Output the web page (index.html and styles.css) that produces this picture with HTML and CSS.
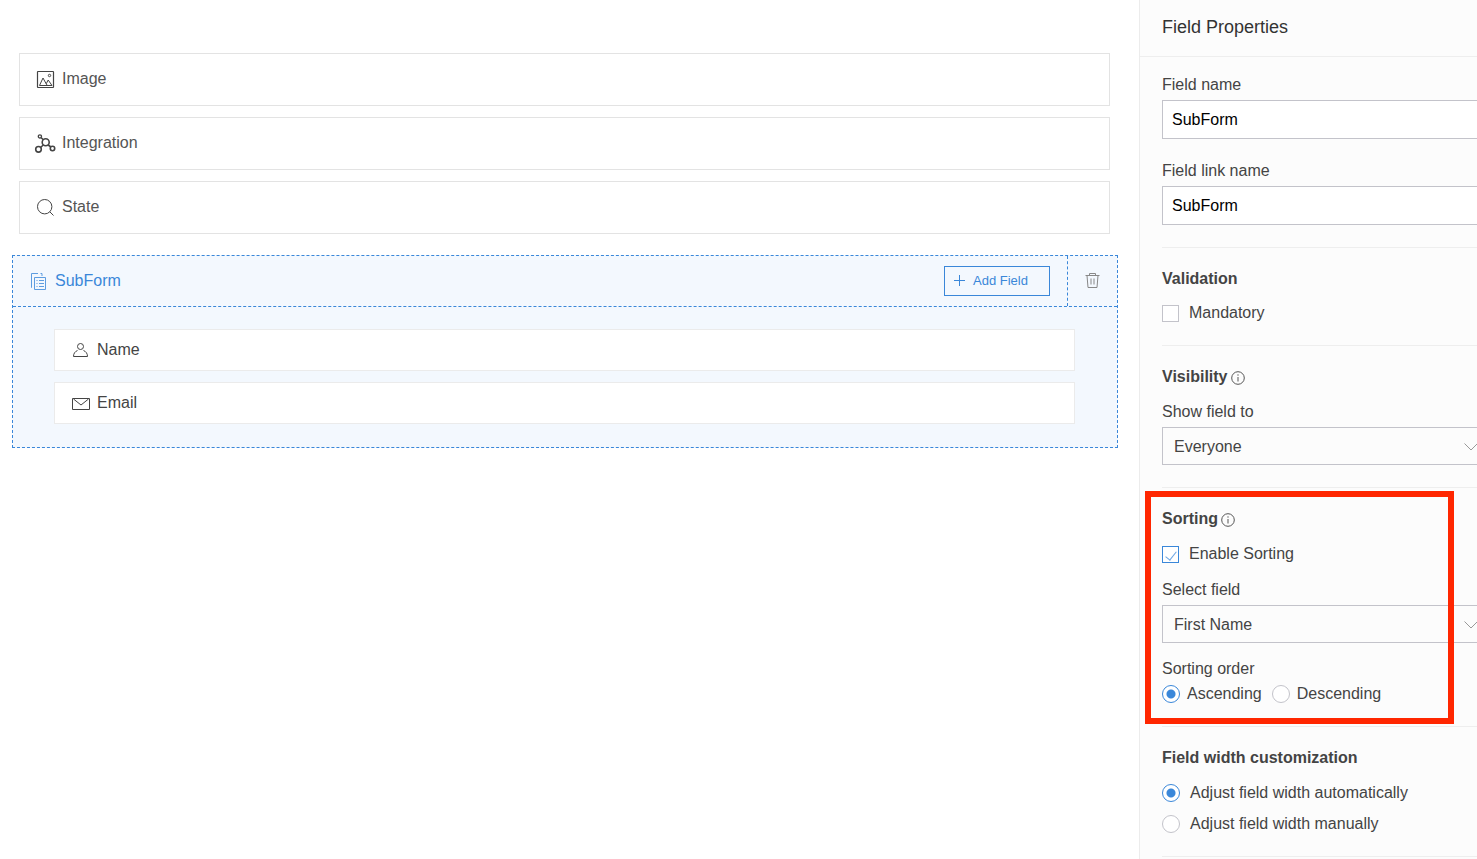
FILE: index.html
```html
<!DOCTYPE html>
<html lang="en">

<head>
    <meta charset="UTF-8">
    <meta name="viewport" content="width=device-width, initial-scale=1.0">
    <link rel="stylesheet" href="styles.css">
    <title>Form Builder</title>
</head>

<body>
    <main class="builder">
        <div class="field-list">
            <div class="field-card">
                <svg class="icon" width="20" height="20" viewBox="0 -1 20 20">
                    <rect x="2.500" y="1.500" width="16" height="16" rx="0.500" stroke-width="1.200" />
                    <path d="M4.500 15.500h12.500L13.200 10l-2 3.800L8 8z M11.200 13.800l1.200 1.700" />
                    <circle cx="14.500" cy="5.500" r="1.200" />
                </svg>
                <span>Image</span>
            </div>
            <div class="field-card">
                <svg class="icon icon-bold" width="20" height="20" viewBox="0 -1 20 20">
                    <circle cx="10.700" cy="8.300" r="3.500" />
                    <circle cx="3.500" cy="15.300" r="2.800" />
                    <circle cx="17.500" cy="14.500" r="2.200" />
                    <circle cx="4.900" cy="2.400" r="1.600" stroke-width="1.300" />
                    <path d="M6 3.500l2.300 2.300M8.300 11l-2.800 2.500M13.200 11l2.700 2" />
                </svg>
                <span>Integration</span>
            </div>
            <div class="field-card">
                <svg class="icon" width="20" height="20" viewBox="0 -1 20 20">
                    <circle cx="9.700" cy="8.700" r="7.200" />
                    <path d="M14.800 13.800l3.700 3.700" />
                </svg>
                <span>State</span>
            </div>
        </div>

        <section class="subform">
            <div class="subform-header">
                <svg class="icon icon-blue icon-soft" width="17" height="20" viewBox="0 0 17 20">
                    <path d="M2 16.500H1.500v-14H8M10.500 2.500h1.500v2.500" />
                    <path d="M4.500 6.500h11v12h-11z" />
                    <path d="M6.500 9.500h1M9 9.500h5M6.500 12.500h1M9 12.500h5M6.500 15.500h1M9 15.500h5" />
                </svg>
                <span class="subform-name">SubForm</span>
                <button type="button" class="add-field">
                    <svg class="icon icon-blue" width="11" height="11" viewBox="0 0 11 11">
                        <path d="M5.500 0v11M0 5.500h11" />
                    </svg>
                    Add Field
                </button>
                <button type="button" class="delete" aria-label="Delete">
                    <svg class="icon" width="15" height="19" viewBox="0 0 15 19">
                        <path d="M0.500 3.500h14M4.500 3.500v-2h6v2M2 3.500l1 12h9l1-12M6 6.500v6M9 6.500v6" />
                    </svg>
                </button>
            </div>
            <div class="subform-body">
                <div class="sub-card">
                    <svg class="icon" width="18" height="16" viewBox="0 0 18 16">
                        <circle cx="8.500" cy="4.500" r="3" />
                        <path d="M5.500 8.500C3 9.500 1.500 11.500 1.500 14.500h14c0-3-1.500-5-4-6" />
                    </svg>
                    <span>Name</span>
                </div>
                <div class="sub-card">
                    <svg class="icon" width="18" height="16" viewBox="0 0 18 16">
                        <path d="M0.500 3.500h17v11h-17z M1.500 4l7.500 6 7.500-6" />
                    </svg>
                    <span>Email</span>
                </div>
            </div>
        </section>
    </main>

    <aside class="properties">
        <h1>Field Properties</h1>

        <div class="properties-body">
            <section class="basic">
                <div class="field">
                    <label for="fieldName">Field name</label>
                    <input type="text" id="fieldName" value="SubForm">
                </div>
                <div class="field">
                    <label for="linkName">Field link name</label>
                    <input type="text" id="linkName" value="SubForm">
                </div>
            </section>

            <section>
                <h2>Validation</h2>
                <label class="check"><input type="checkbox"> Mandatory</label>
            </section>

            <section>
                <h2>Visibility
                    <svg class="icon info" width="14" height="14" viewBox="0 0 14 14">
                        <circle cx="7" cy="7" r="6.300" />
                        <path d="M7 6v4.500M7 3.300v1.400" />
                    </svg>
                </h2>
                <div class="field">
                    <label for="showTo">Show field to</label>
                    <div class="select">
                        <select id="showTo">
                            <option>Everyone</option>
                        </select>
                        <svg class="icon chevron" width="14" height="8" viewBox="0 0 14 8">
                            <path d="M0.500 0.500L7 7l6.500-6.500" />
                        </svg>
                    </div>
                </div>
            </section>

            <section class="sorting">
                <h2>Sorting
                    <svg class="icon info" width="14" height="14" viewBox="0 0 14 14">
                        <circle cx="7" cy="7" r="6.300" />
                        <path d="M7 6v4.500M7 3.300v1.400" />
                    </svg>
                </h2>
                <label class="check"><input type="checkbox" checked> Enable Sorting</label>
                <div class="field">
                    <label for="sortField">Select field</label>
                    <div class="select">
                        <select id="sortField">
                            <option>First Name</option>
                        </select>
                        <svg class="icon chevron" width="14" height="8" viewBox="0 0 14 8">
                            <path d="M0.500 0.500L7 7l6.500-6.500" />
                        </svg>
                    </div>
                </div>
                <div class="field" role="radiogroup" aria-labelledby="orderLabel">
                    <span class="group-label" id="orderLabel">Sorting order</span>
                    <div class="order">
                        <label class="radio"><input type="radio" name="order" checked> Ascending</label>
                        <label class="radio"><input type="radio" name="order"> Descending</label>
                    </div>
                </div>
                <div class="highlight"></div>
            </section>

            <section>
                <h2>Field width customization</h2>
                <div class="width-options">
                    <label class="check"><input type="radio" name="width" checked> Adjust field width automatically</label>
                    <label class="check"><input type="radio" name="width"> Adjust field width manually</label>
                </div>
            </section>
        </div>
    </aside>
</body>

</html>
```
FILE: styles.css
```css
* {
    box-sizing: border-box;
}

body {
    font-family: "Liberation Sans", Arial, sans-serif;
    font-size: 16px;
    line-height: 20px;
    color: #444;
    background-color: #fff;
    margin: 0;
    display: flex;
    min-height: 100vh;
}

input,
select,
button {
    font-family: inherit;
    font-size: inherit;
    margin: 0;
}

.icon {
    fill: none;
    stroke: #444;
    stroke-width: 1;
    flex-shrink: 0;
}

.icon-bold {
    stroke-width: 1.6;
    overflow: visible;
}

.icon-blue {
    stroke: #3a87d9;
}

.icon-soft {
    opacity: 0.8;
}

/* form builder */
.builder {
    flex: 1;
    min-width: 0;
    padding: 53px 21px 0 12px;
}

.field-list {
    display: flex;
    flex-direction: column;
    gap: 11px;
    padding: 0 8px 0 7px;
}

.field-card {
    display: flex;
    align-items: center;
    gap: 7px;
    padding: 15px 15px 16px;
    color: #555;
    border: 1px solid #e3e3e3;
}

.subform {
    margin-top: 21px;
    background-color: #f3f8fe;
    border: 1px dashed #3a87d9;
}

.subform-header {
    display: flex;
    align-items: center;
    height: 51px;
    padding-left: 17px;
    border-bottom: 1px dashed #3a87d9;
}

.subform-name {
    flex: 1;
    margin-left: 8px;
    color: #3a87d9;
}

.add-field {
    display: flex;
    align-items: center;
    gap: 8px;
    width: 106px;
    height: 30px;
    margin-right: 17px;
    padding: 0 9px 2px;
    font-size: 13px;
    color: #3a87d9;
    background: none;
    border: 1px solid #3a87d9;
    cursor: pointer;
}

.delete {
    display: flex;
    align-items: center;
    justify-content: center;
    align-self: stretch;
    width: 50px;
    padding: 0;
    background: none;
    border: none;
    border-left: 1px dashed #3a87d9;
    cursor: pointer;
}

.delete .icon {
    stroke: #888;
}

.subform-body {
    display: flex;
    flex-direction: column;
    gap: 11px;
    padding: 22px 42px 23px 41px;
}

.sub-card {
    display: flex;
    align-items: center;
    gap: 7px;
    padding: 10px 17px;
    background-color: #fff;
    border: 1px solid #ebebeb;
}

/* properties panel */
.properties {
    width: 338px;
    flex-shrink: 0;
    background-color: #fcfcfc;
    border-left: 1px solid #ececec;
    overflow: hidden;
}

h1 {
    margin: 0;
    padding: 16px 22px 18px;
    font-size: 18px;
    font-weight: normal;
    line-height: 22px;
    color: #333;
    border-bottom: 1px solid #eee;
}

/* the fields run past the right edge of the panel */
.properties-body {
    margin: 0 -8px 0 22px;
}

.properties-body section {
    padding: 21px 0 22px;
    border-bottom: 1px solid #eee;
}

.properties-body .basic {
    padding-top: 18px;
}

.basic .field + .field {
    margin-top: 22px;
}

h2 {
    display: flex;
    align-items: center;
    gap: 3px;
    margin: 0;
    font-size: 16px;
    line-height: 20px;
}

.info {
    stroke: #555;
    margin-top: 2px;
}

.field label,
.group-label {
    display: block;
}

.field input[type="text"] {
    display: block;
    width: 100%;
    height: 39px;
    margin-top: 5px;
    padding: 0 9px;
    color: #000;
    background-color: #fff;
    border: 1px solid #c3c3ca;
}

h2 + .field {
    margin-top: 15px;
}

.check + .field,
.sorting .field + .field {
    margin-top: 16px;
}

.select {
    position: relative;
    margin-top: 5px;
}

select {
    display: block;
    width: 100%;
    height: 38px;
    padding: 0 11px;
    color: #444;
    background-color: #fcfcfc;
    border: 1px solid #c3c3ca;
    border-radius: 0;
    appearance: none;
}

.chevron {
    position: absolute;
    top: 16px;
    right: 7px;
    stroke: #999;
    pointer-events: none;
}

.check {
    display: flex;
    align-items: center;
    gap: 10px;
    margin-top: 14px;
}

.sorting .check {
    margin-top: 15px;
}

input[type="checkbox"],
input[type="radio"] {
    appearance: none;
    width: 18px;
    height: 18px;
    flex-shrink: 0;
    background-color: #fff;
    border: 1px solid #c3c3ca;
}

input[type="checkbox"] {
    width: 17px;
    height: 17px;
}

input[type="checkbox"]:checked {
    display: grid;
    place-items: center;
    border-color: #3a87d9;
}

input[type="checkbox"]:checked::before {
    content: "";
    width: 5px;
    height: 10px;
    border: solid #6ba5e3;
    border-width: 0 1px 1px 0;
    transform: rotate(38deg);
}

input[type="radio"] {
    border-radius: 50%;
}

input[type="radio"]:checked {
    border-color: #3a87d9;
    background-image: radial-gradient(circle, #3a87d9 4px, #fff 5px);
}

.order {
    display: flex;
    gap: 10px;
    margin-top: 5px;
}

.field .radio {
    display: flex;
    align-items: center;
    gap: 7px;
}

.width-options {
    display: flex;
    flex-direction: column;
    gap: 11px;
    margin-top: 15px;
}

.width-options .check {
    margin-top: 0;
}

.sorting {
    position: relative;
}

.highlight {
    position: absolute;
    top: 3px;
    right: 31px;
    bottom: 2px;
    left: -17px;
    border: 6px solid #ff2600;
    pointer-events: none;
}
```
